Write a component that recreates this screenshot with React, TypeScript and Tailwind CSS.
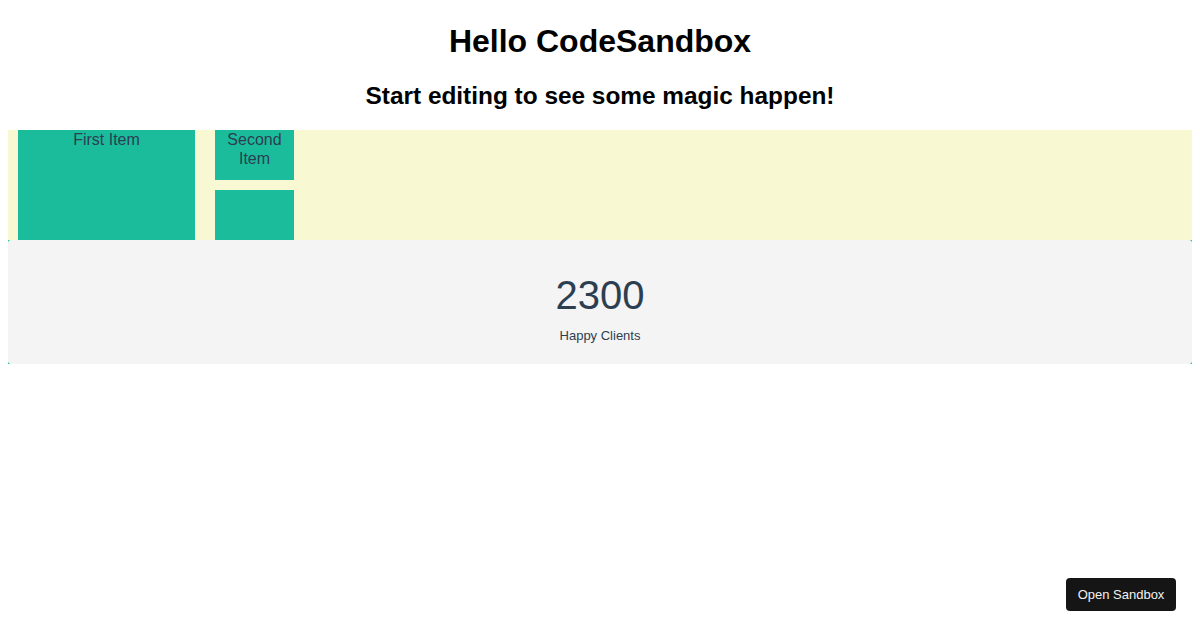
export default function App() {
  return (
    <div className="min-h-[630px] bg-white px-2 font-['Liberation_Sans',Arial,sans-serif] text-black">
      <div className="text-center">
        <h1 className="pt-[23px] text-[32px] font-bold leading-[37px]">Hello CodeSandbox</h1>
        <h2 className="mt-[22px] text-[24.4px] font-bold leading-[28px]">
          Start editing to see some magic happen!
        </h2>
      </div>

      <div className="mt-[20px] flex h-[110px] gap-5 bg-[#f8f8d2] px-[10px] text-[16px] text-[#2c3e50]">
        <div className="w-[177px] bg-[#1abc9c] text-center leading-[19px]">First Item</div>
        <div className="flex w-[79px] flex-col gap-[10px]">
          <div className="h-[50px] bg-[#1abc9c] text-center leading-[19px]">
            Second
            <br />
            Item
          </div>
          <div className="h-[50px] bg-[#1abc9c]" />
        </div>
      </div>

      <div className="bg-[#1abc9c]">
        <div className="flex h-[124px] flex-col items-center rounded-[3px] bg-[#f4f4f4] text-[#2c3e50]">
          <div className="mt-[32px] text-[40px] leading-[46px]">2300</div>
          <div className="mt-[10px] text-[13px] leading-[15px]">Happy Clients</div>
        </div>
      </div>

      <button className="absolute right-6 top-[578px] h-[33px] w-[110px] rounded-[4px] bg-[#151515] text-[13px] text-[#f2f2f2]">
        Open Sandbox
      </button>
    </div>
  );
}
